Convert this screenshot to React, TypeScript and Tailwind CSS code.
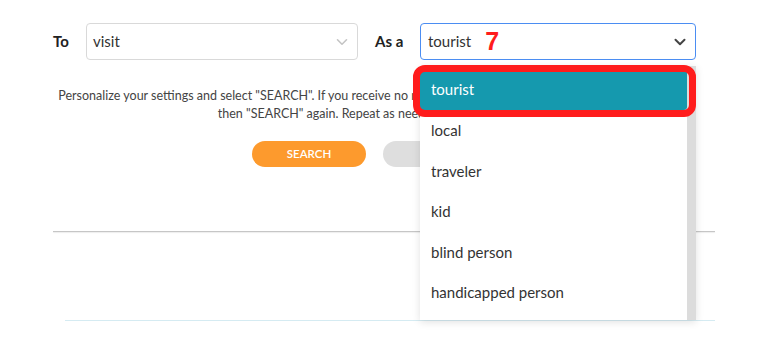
import React from 'react';

const options = ['tourist', 'local', 'traveler', 'kid', 'blind person', 'handicapped person'];

const Chevron: React.FC<{ className?: string; strokeWidth?: number }> = ({ className, strokeWidth = 1.6 }) => (
  <svg viewBox="0 0 12 8" className={className} fill="none" stroke="currentColor" strokeWidth={strokeWidth} strokeLinecap="round" strokeLinejoin="round">
    <path d="M1.5 1.8 6 6.2l4.5-4.4" />
  </svg>
);

const App: React.FC = () => {
  return (
    <div className="relative h-[350px] w-[768px] overflow-hidden bg-white font-['Lato','Open_Sans',sans-serif] text-[#333]">
      {/* settings row */}
      <div className="flex items-center pl-[53px] pt-[23px]">
        <span className="w-[33px] text-[15px] font-bold text-[#222]">To</span>
        <div className="flex h-[37px] w-[272px] items-center justify-between rounded-[4px] border border-[#d9d9d9] pl-[6px] pr-[9px]">
          <span className="text-[15px] text-[#333]">visit</span>
          <Chevron className="h-[8px] w-[12px] text-[#c4c4c4]" />
        </div>
        <span className="ml-[17px] w-[45px] text-[15px] font-bold text-[#222]">As a</span>
        <div className="relative">
          <div className="flex h-[37px] w-[276px] items-center justify-between rounded-[4px] border-[1.5px] border-[#4b8df2] pl-[7px] pr-[9px]">
            <div className="flex items-center">
              <span className="text-[15px] text-[#333]">tourist</span>
              <span className="ml-[14px] font-['Liberation_Sans',sans-serif] text-[25px] font-bold leading-none text-[#ff1c1c]">7</span>
            </div>
            <Chevron className="h-[8px] w-[12px] text-[#444]" strokeWidth={2} />
          </div>

          {/* open dropdown */}
          <div className="absolute left-0 top-[43px] z-10 h-[254px] w-[276px] overflow-hidden bg-white shadow-[0_2px_8px_rgba(0,0,0,0.12)]">
            <div className="absolute right-0 top-0 h-full w-[9px] bg-[#dcdcdc]" />
            <div className="mr-[9px]">
              {options.map((o, i) => (
                <div
                  key={o}
                  className={
                    i === 0
                      ? 'flex h-[44px] items-center rounded-[3px] bg-[#1599ae] pl-[11px] pt-[2px] text-[15px] text-white'
                      : 'flex h-[40.5px] items-center pl-[11px] text-[15px] text-[#333]'
                  }
                >
                  {o}
                </div>
              ))}
            </div>
          </div>

          {/* annotation box */}
          <div className="pointer-events-none absolute left-[-7px] top-[42px] z-20 h-[52px] w-[283px] rounded-[12px] border-[7px] border-[#ff1c1c]" />
        </div>
      </div>

      <div className="w-[643px] ml-[53px]">
        {/* help text */}
        <p className="mt-[27px] whitespace-nowrap text-center text-[12.5px] leading-[18px] text-[#444]">
          Personalize your settings and select "SEARCH". If you receive no results, please change one or more of your settings,
          <br />
          then "SEARCH" again. Repeat as needed for more results.
        </p>

        {/* buttons */}
        <div className="mt-[18px] flex justify-center gap-[17px]">
          <button className="h-[26px] w-[114px] rounded-full bg-[#fd9a2d] text-[11.5px] font-semibold text-white">SEARCH</button>
          <button className="h-[26px] w-[114px] rounded-full bg-[#dedede] text-[11.5px] font-semibold text-white">CLEAR</button>
        </div>
      </div>

      {/* dividers */}
      <div className="mx-[53px] mt-[64px] h-px bg-[#c6c6c6] shadow-[0_1px_1px_rgba(0,0,0,0.08)]" />
      <div className="ml-[65px] mr-[53px] mt-[88px] h-px bg-[#d5ebf2]" />
    </div>
  );
};

export default App;
